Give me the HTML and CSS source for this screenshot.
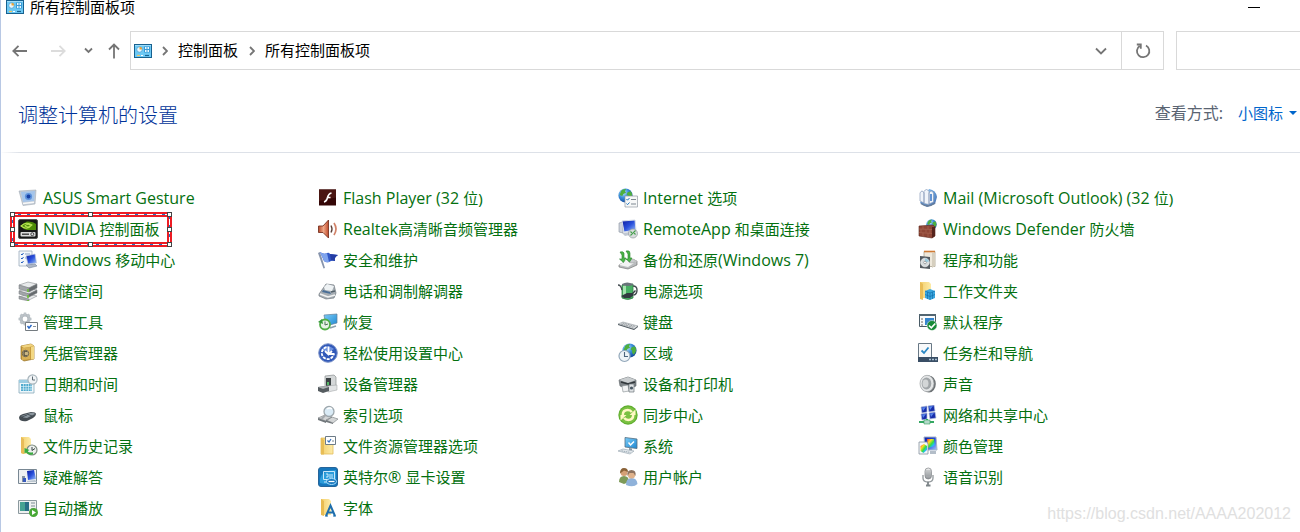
FILE: index.html
```html
<!DOCTYPE html>
<html lang="zh-CN">
<head>
<meta charset="utf-8">
<title>所有控制面板项</title>
<link rel="stylesheet" href="styles.css">
</head>
<body>
<svg class="defs" aria-hidden="true">
  <defs>
    <linearGradient id="gBlue" x1="0" y1="0" x2="1" y2="1"><stop offset="0" stop-color="#0a1a9c"/><stop offset=".5" stop-color="#2a50dc"/><stop offset="1" stop-color="#a4c8fa"/></linearGradient>
    <linearGradient id="gSky" x1="0" y1="0" x2="1" y2="1"><stop offset="0" stop-color="#7ccdf8"/><stop offset="1" stop-color="#1d86d0"/></linearGradient>
    <linearGradient id="gGrey" x1="0" y1="0" x2="0" y2="1"><stop offset="0" stop-color="#f4f4f4"/><stop offset="1" stop-color="#8e9296"/></linearGradient>
    <linearGradient id="gFolder" x1="0" y1="0" x2="1" y2="0"><stop offset="0" stop-color="#f3cf6b"/><stop offset="1" stop-color="#fdeba8"/></linearGradient>
    <linearGradient id="gHorn" x1="0" y1="0" x2="1" y2="0"><stop offset="0" stop-color="#b5482a"/><stop offset=".5" stop-color="#f0a888"/><stop offset="1" stop-color="#c04c2c"/></linearGradient>
    <radialGradient id="gGlobe" cx=".35" cy=".3" r=".8"><stop offset="0" stop-color="#bfe6ff"/><stop offset=".45" stop-color="#3b8edb"/><stop offset="1" stop-color="#0b3b8f"/></radialGradient>
    <linearGradient id="gRainbow" x1="0" y1="0" x2="1" y2="1"><stop offset="0" stop-color="#f33"/><stop offset=".3" stop-color="#fd2"/><stop offset=".55" stop-color="#3d4"/><stop offset=".75" stop-color="#2bf"/><stop offset="1" stop-color="#c3e"/></linearGradient>
    <symbol id="panel" viewBox="0 0 18 14">
      <rect x=".5" y=".5" width="17" height="13" fill="#6cc8f4" stroke="#17618f"/>
      <path d="M1 1h16v1H1z" fill="#9fdcf9"/>
      <circle cx="5.500" cy="5.500" r="2.700" fill="#eaf8ff" stroke="#3a8fc4" stroke-width=".6"/><path d="M5.500 5.500V2.800a2.700 2.700 0 0 1 2.700 2.700z" fill="#e9a33a"/>
      <path d="M10 2.500h6v6h-6z" fill="#3a9ad4"/>
      <path d="M11 3h1.500v2H11zM13.500 3H15v2h-1.500zM11 6h1.500v2H11zM13.500 6H15v2h-1.500z" fill="#e9f8ff"/>
      <path d="M3 11.500h3" stroke="#f3c55c" stroke-width="1.200"/><path d="M7 11.500h2" stroke="#fff" stroke-width="1.200"/><path d="M11 11.500h4" stroke="#17618f" stroke-width="1.200"/>
    </symbol>
    <symbol id="globe" viewBox="0 0 14 14">
      <circle cx="7" cy="7" r="6.600" fill="url(#gGlobe)"/>
      <path d="M3 2.500q2-2 4.500-1.500l-1 2 1 1.500-2.500 1L4 7.500 1.500 6.500zM9 4l3-1q1.500 2 1 5l-2 3-1.500-2V7L8 6z" fill="#4eaf3e"/>
    </symbol>
  </defs>
</svg>

<header class="titlebar">
  <svg class="panel-icon" aria-hidden="true"><use href="#panel"/></svg>
  <span class="window-title">所有控制面板项</span>
  <button class="minimize" type="button" aria-label="最小化"></button>
</header>

<nav class="toolbar" aria-label="导航">
  <button class="tool back" type="button" aria-label="后退"><svg width="16" height="14" viewBox="0 0 16 14"><path d="M15 7H1.500M6.500 1.800L1.300 7l5.200 5.200"/></svg></button>
  <button class="tool forward" type="button" aria-label="前进" disabled><svg width="16" height="14" viewBox="0 0 16 14"><path d="M1 7h13.500M9.500 1.800L14.700 7l-5.200 5.200"/></svg></button>
  <button class="tool recent" type="button" aria-label="最近浏览的位置"><svg width="9" height="7" viewBox="0 0 9 7"><path d="M1 1.500l3.500 3.500L8 1.500"/></svg></button>
  <button class="tool up" type="button" aria-label="向上"><svg width="12" height="16" viewBox="0 0 12 16"><path d="M6 15.500V1.500M1 6.500l5-5 5 5"/></svg></button>
  <div class="address">
    <svg class="panel-icon" aria-hidden="true"><use href="#panel"/></svg>
    <svg class="crumb-arrow" width="6" height="10" viewBox="0 0 6 10" aria-hidden="true"><path d="M1 1l4 4-4 4"/></svg>
    <a class="crumb" href="#">控制面板</a>
    <svg class="crumb-arrow" width="6" height="10" viewBox="0 0 6 10" aria-hidden="true"><path d="M1 1l4 4-4 4"/></svg>
    <a class="crumb" href="#">所有控制面板项</a>
    <button class="tool history" type="button" aria-label="以前的位置"><svg width="12" height="8" viewBox="0 0 12 8"><path d="M1 1.500l5 5 5-5"/></svg></button>
    <button class="tool refresh" type="button" aria-label="刷新"><svg width="16" height="16" viewBox="0 0 16 16"><path d="M11 2.500a6.200 6.200 0 1 1-6.400.4M1.800 1.500h4v4.300"/></svg></button>
  </div>
  <input class="search" type="search" aria-label="搜索控制面板">
</nav>

<section class="heading">
  <h1>调整计算机的设置</h1>
  <label class="view-label" for="view">查看方式:</label>
  <span class="view">
    <select id="view"><option>类别</option><option>大图标</option><option selected>小图标</option></select>
    <svg width="8" height="4" viewBox="0 0 8 4" aria-hidden="true"><path d="M0 0h8L4 4z"/></svg>
  </span>
</section>

<main>
<ul class="items">
  <li><a href="#"><svg viewBox="0 0 20 20"><path d="M1 3l17-1-1 14-12 1.500z" fill="#c3ccd6" stroke="#a2abb6" stroke-width=".6"/><path d="M3 4l14-1-1 10-11 1z" fill="#a4c4ea"/><circle cx="10.500" cy="8.500" r="3.600" fill="#5d92dc"/><circle cx="10.500" cy="8.500" r="1.900" fill="#173fa4"/><path d="M5 15.500l11-1.300" stroke="#f8f8f8" stroke-width="1.500"/></svg><span class="name"><span class="latin">ASUS Smart Gesture</span></span></a></li>
  <li><a href="#"><svg viewBox="0 0 20 20"><path d="M1 1.500h17v16H1z" fill="#340606"/><path d="M1 1.500h17v8L1 13z" fill="#4a1612"/><path d="M6 14q2.200-.5 3.300-3.800Q10.500 5.500 13.500 5M9 9.500h3.500" fill="none" stroke="#fff" stroke-width="1.700"/></svg><span class="name"><span class="latin">Flash Player (32 </span>位)</span></a></li>
  <li><a href="#"><svg viewBox="0 0 20 20"><use href="#globe" width="15" height="15"/><path d="M7 8h12.500v11H7z" fill="#f7f8f8" stroke="#909aa2" stroke-width=".7"/><path d="M8.500 11l1 1.200 2-2.200M8.500 15.500l1 1.200 2-2.200" fill="none" stroke="#2277bf"/><path d="M13 11.500h5M13 16h5" stroke="#7d8790"/></svg><span class="name"><span class="latin">Internet </span>选项</span></a></li>
  <li><a href="#"><svg viewBox="0 0 20 20"><path d="M11 1q7 1 8 8l-2 7-8 3-7-4z" fill="url(#gGlobe)" opacity=".75"/><path d="M2 5q2-4 4 0v10l-4-2zM6 3.500q2.500-4 5 0v13l-5-1zM11 5q2-4 4.500 0v9L11 16z" fill="#f0f4fa" stroke="#8799b8" stroke-width=".7"/><path d="M3 15.500q7 5 14-.5" stroke="#677d99" fill="none" stroke-width="1.500"/><path d="M13 6v7" stroke="#3374c7" stroke-width="1.500"/></svg><span class="name"><span class="latin">Mail (Microsoft Outlook) (32 </span>位)</span></a></li>

  <li class="marked"><a href="#"><svg viewBox="0 0 20 20"><rect x=".5" y=".5" width="19" height="19" rx="1.500" fill="#171817" stroke="#555"/><path d="M9 2.500q6-.5 9 2.500v6H9q-4-1-6-4 2.500-3.500 6-4.500z" fill="#4d8b08"/><path d="M3 7q5-5 11-1-5 6-11 1zm4-.2q3.500-3 5.500 0-2.500 2.500-5.500 0z" fill="none" stroke="#b9e455" stroke-width="1.100"/><rect x="2.500" y="13" width="15" height="4.500" rx="1" fill="#ddd"/><path d="M4 15.200h7" stroke="#333" stroke-width="1.300"/><circle cx="14.300" cy="15.200" r="1.500" fill="none" stroke="#444"/></svg><span class="name"><span class="latin">NVIDIA </span>控制面板</span></a>
    <svg class="marquee" aria-hidden="true">
      <rect class="marquee-band"/><rect class="marquee-base"/><rect class="marquee-dash"/>
      <g class="handles"><rect class="l t"/><rect class="c t"/><rect class="r t"/><rect class="l m"/><rect class="r m"/><rect class="l b"/><rect class="c b"/><rect class="r b"/></g>
    </svg>
  </li>
  <li><a href="#"><svg viewBox="0 0 20 20"><path d="M.5 7h4.500L10.500 1v18L5 13.500H.5z" fill="url(#gHorn)" stroke="#783322" stroke-width=".9"/><path d="M13 6.500q2 3.500 0 7" fill="none" stroke="#5d4038" stroke-width="1.400"/><path d="M16 4q4 6 0 12" fill="none" stroke="#d18268" stroke-width="1.700"/></svg><span class="name"><span class="latin">Realtek</span>高清晰音频管理器</span></a></li>
  <li><a href="#"><svg viewBox="0 0 20 20"><path d="M1 4l4-1v11l-4-1z" fill="#cdd2dc" stroke="#88909e" stroke-width=".6"/><path d="M4 2l13-1 1 10-12 2z" fill="url(#gBlue)" stroke="#d7dde8"/><path d="M4 14l8-1 4 2-9 2z" fill="#c0c8d2"/><circle cx="15" cy="14.500" r="4.500" fill="#d8dcdd" stroke="#949b9f" stroke-width=".7"/><path d="M12.500 12.500l2 2-2 2M17.500 11.500l-2 2 2 2" fill="none" stroke="#46a04d" stroke-width="1.100"/></svg><span class="name"><span class="latin">RemoteApp </span>和桌面连接</span></a></li>
  <li><a href="#"><svg viewBox="0 0 20 20"><use href="#globe" x="8" width="11" height="11"/><path d="M1 7l14-1 2 2v9l-3 2-13-2z" fill="#8e4636" stroke="#5d261d" stroke-width=".6"/><path d="M14 8l3 0v9l-3 2z" fill="#55231c"/><path d="M1 10l13 .5M1 13.500l13 1M5 7v3m5-3v3M3 10v3m5-2.500v3m4-3v3.500M5 14v3.500m5-3v4" stroke="#b0705f" stroke-width=".5"/></svg><span class="name"><span class="latin">Windows Defender </span>防火墙</span></a></li>

  <li><a href="#"><svg viewBox="0 0 20 20"><path d="M1 1h13v15H1z" fill="#f4f7fa" stroke="#9dacbc" stroke-width=".8"/><path d="M3 4l1 1 1.500-2M3 8l1 1 1.500-2M3 12l1 1 1.500-2" stroke="#235fbd" fill="none"/><path d="M7 4h5M7 8h4" stroke="#879ec5"/><path d="M8 6l9-2 1.500 9L10 14z" fill="url(#gBlue)" stroke="#b9c5da" stroke-width=".7"/><path d="M8 15l9-1 2 2-8 2z" fill="#aeb8c6" stroke="#75859c" stroke-width=".6"/></svg><span class="name"><span class="latin">Windows </span>移动中心</span></a></li>
  <li><a href="#"><svg viewBox="0 0 20 20"><path d="M0 3l2-1 5 16-1.500.5z" fill="#8794ac"/><path d="M2 2q4 3 7 1 2-1 3 1l8 1q-4 2-3 6-3-1-6 1-3 1-5-1z" fill="#3157c5"/><path d="M2 2q4 3 7 1l2 9q-3 1-5-1z" fill="#7ea3ed"/><path d="M12 4l8 1q-4 2-3 6l-4-1z" fill="#243da4"/></svg><span class="name">安全和维护</span></a></li>
  <li><a href="#"><svg viewBox="0 0 20 20"><path d="M1 15l10-6 8 2v4l-9 4-9-2z" fill="#b9bcbe" stroke="#777" stroke-width=".7"/><path d="M1 15l10-7 8 3-9 6z" fill="#f2f3f3"/><ellipse cx="14" cy="11" rx="3.500" ry="2" fill="#c8ccce" stroke="#999" stroke-width=".5"/><path d="M2 2q3-1 4 1v5h2l-2.500 4.500L1.500 9H4V5zM8 1q4-1 4 2v5h2l-2.500 4L8 9h2V4z" fill="#4bb448" stroke="#258328" stroke-width=".6"/></svg><span class="name">备份和还原<span class="latin">(Windows 7)</span></span></a></li>
  <li><a href="#"><svg viewBox="0 0 20 20"><path d="M6 1.500h11v15H6z" fill="#eee8db" stroke="#aaa391" stroke-width=".8"/><path d="M14 3h3v13l-3 2z" fill="#d6cfbf"/><path d="M6 1.500h11" stroke="#cf7a34" stroke-width="1.600"/><path d="M2 6l10 1v12l-10-1z" fill="#535a60"/><circle cx="7" cy="12.500" r="4.300" fill="#d8dddf" stroke="#f2f2f2" stroke-width=".7"/><path d="M7 8.500q3 0 4 3L7 12.500z" fill="#9acbdf"/><circle cx="7" cy="12.500" r="1.300" fill="#fff" stroke="#777" stroke-width=".6"/></svg><span class="name">程序和功能</span></a></li>

  <li><a href="#"><svg viewBox="0 0 20 20"><g stroke="#777b7e" stroke-width=".5"><path d="M1 4l9-3 9 2-8 4zM1 10l9-3 9 2-8 4zM1 16l9-3 9 2-8 4z" fill="#e8eaeb"/><path d="M1 4l10 3v4L1 8zM1 10l10 3v3L1 13zM1 15l10 3v2L1 18z" fill="#a2a6a9"/><path d="M11 7l8-4v4l-8 4zM11 13l8-4v3l-8 4z" fill="#666b6e"/></g><path d="M10 8v3m0 3v3m0 2v1" stroke="#6bbf37" stroke-width="1.600"/></svg><span class="name">存储空间</span></a></li>
  <li><a href="#"><svg viewBox="0 0 20 20"><path d="M1 13l5-7 2-3 8 1 2 8-2 5-8 1-7-3z" fill="#a6adb3" stroke="#70797f" stroke-width=".7"/><path d="M6 6l3-3 7 2-2 5-7-1z" fill="#eef2f4"/><path d="M5 9l7 2 1 2-9-2z" fill="#496e97"/><path d="M2 13l8 3 7-2" fill="none" stroke="#f2f3f3" stroke-width="1.500"/><path d="M13 11l4-1" stroke="#53616b" stroke-width="1.500"/></svg><span class="name">电话和调制解调器</span></a></li>
  <li><a href="#"><svg viewBox="0 0 20 20"><path d="M4 4l11-1v14q-5 3-11 0z" fill="#48b064" stroke="#358047" stroke-width=".8"/><path d="M5 5l3-1v13l-3-1z" fill="#a4e3ae"/><path d="M4 3q5-3 11 0v1q-5 2-11 0z" fill="#69737a"/><path d="M15 5q4 0 4 4t-3 5M0 4q3 0 4 5" fill="none" stroke="#444c51" stroke-width="1.400"/><path d="M3 15l6-3 5 0 3-3 1 1-3 3 1 1-4 3-6 0z" fill="#323a40"/></svg><span class="name">电源选项</span></a></li>
  <li><a href="#"><svg viewBox="0 0 20 20"><path d="M2 1h9l2 2v14H2z" fill="url(#gFolder)"/><path d="M2 1l3 2v16l-3-1z" fill="#e9bd57"/><path d="M7 10l5-2 5 2v7l-5 2-5-2z" fill="#3ba7df"/><path d="M7 10l5 2 5-2M12 12v7M9.500 11v7M14.500 11v7M7 13.500l5 2 5-2" stroke="#1271ae" stroke-width=".7" fill="none"/></svg><span class="name">工作文件夹</span></a></li>

  <li><a href="#"><svg viewBox="0 0 20 20"><circle cx="7" cy="7" r="4" fill="none" stroke="#b4bbc0" stroke-width="3.200"/><path d="M7 .5v3m0 7v3M.5 7h3m7 0h3M2.500 2.500l2 2m5 0l2-2M2.500 11.500l2-2" stroke="#bcc3c8" stroke-width="2.500"/><path d="M7.500 10.500h12v8h-12z" fill="#fff" stroke="#747b80"/><path d="M9.500 14l1.500 2 2.500-3" fill="none" stroke="#2364c4" stroke-width="1.400"/><path d="M15 14.500h3" stroke="#8b9399"/></svg><span class="name">管理工具</span></a></li>
  <li><a href="#"><svg viewBox="0 0 20 20"><path d="M6 3l13-1v9l-11 3z" fill="url(#gSky)" stroke="#62809a" stroke-width=".7"/><path d="M12 16l6-2" stroke="#8ca0ac" stroke-width="1.500"/><circle cx="7" cy="12.500" r="5" fill="#e8f2e5" stroke="#52ae45" stroke-width="1.800"/><path d="M0 10l4-3 1 5z" fill="#37983b"/><path d="M7 9.500v3.500l3-1" stroke="#507158" fill="none"/></svg><span class="name">恢复</span></a></li>
  <li><a href="#"><svg viewBox="0 0 20 20"><path d="M0 12l5-2 15 4-4 3z" fill="#dfe2e4" stroke="#92989d" stroke-width=".6"/><path d="M0 12l16 5v1L0 13zM16 17l4-3v1l-4 3z" fill="#505960"/><path d="M4.500 11l13 3.500M3 12l13 3.500" stroke="#767d82" stroke-width=".7" stroke-dasharray="2 .7"/></svg><span class="name">键盘</span></a></li>
  <li><a href="#"><svg viewBox="0 0 20 20"><path d="M1.500 2.500h16v12h-16z" fill="#f8fafb" stroke="#495b66"/><path d="M1 2h17v2H1z" fill="#526571"/><path d="M3 7h2m-2 3h2m-2 3h2" stroke="#666" stroke-width="1.200"/><path d="M7 6h9v7H7z" fill="#3485cd"/><circle cx="14" cy="13.500" r="5" fill="#168a36" stroke="#fff" stroke-width=".5"/><path d="M11 13.500l2.300 2.300 4-4.300" stroke="#fff" stroke-width="1.600" fill="none"/></svg><span class="name">默认程序</span></a></li>

  <li><a href="#"><svg viewBox="0 0 20 20"><path d="M3 3l10-2 3 2v13l-10 2-3-2z" fill="#c79b3c" stroke="#997427" stroke-width=".7"/><path d="M3 3l10-2 3 2-10 2z" fill="#f1d480"/><path d="M13 4l3-1v13l-3 .5z" fill="#f3d884"/><path d="M4 5l8-1v12l-8 1z" fill="#d8b156"/><circle cx="7.500" cy="10.500" r="3.200" fill="#c9b582" stroke="#6f6650"/><path d="M9 8.500q-3-1-3 2t3 2" stroke="#555140" stroke-width="1.200" fill="none"/></svg><span class="name">凭据管理器</span></a></li>
  <li><a href="#"><svg viewBox="0 0 20 20"><circle cx="10" cy="10" r="9.300" fill="#3159b9" stroke="#8096c9"/><path d="M3 7q6-7 13-1l-5 3z" fill="#6e92df"/><path d="M8.500 4.200a6 6 0 1 0 7.200 7" fill="none" stroke="#fff" stroke-width="1.800" stroke-dasharray="3 1"/><path d="M10.500 3.500v7.500h6M7 8l3.500 3.500L14 8" stroke="#fff" fill="none" stroke-width="1.800"/></svg><span class="name">轻松使用设置中心</span></a></li>
  <li><a href="#"><svg viewBox="0 0 20 20"><use href="#globe" x="4" width="15" height="15"/><circle cx="6.500" cy="13" r="5.500" fill="#edf3f7" stroke="#93a8ba" stroke-width="1.200"/><path d="M6.500 9v4.500h3.500" fill="none" stroke="#4c657d" stroke-width="1.100"/></svg><span class="name">区域</span></a></li>
  <li><a href="#"><svg viewBox="0 0 20 20"><path d="M.5.5h13v15H.5z" fill="#f8f9fa" stroke="#687885"/><path d="M3.500 7.500l2.500 2.500 4.500-5.500" stroke="#2a88c5" fill="none" stroke-width="1.800"/><path d="M0 14h20v5H0z" fill="#394e65"/><path d="M11 16.500h2m1 0h2m1 0h2" stroke="#a9bfd2" stroke-width="1.400"/></svg><span class="name">任务栏和导航</span></a></li>

  <li><a href="#"><svg viewBox="0 0 20 20"><path d="M1 6h15v13H1z" fill="#eff7fb" stroke="#89a9ba" stroke-width=".8"/><path d="M1 6h15v3H1z" fill="#9ccde2"/><path d="M3 10h11v7H3z" fill="#51aacd"/><path d="M3 12.500h11M3 15h11M5.500 10v8M8 10v8M10.500 10v8M13 10v8" stroke="#e4f5fb" stroke-width=".6"/><circle cx="14.500" cy="5.500" r="4.600" fill="#f1f4f6" stroke="#a6b3ba" stroke-width="1.200"/><path d="M14.500 2.500v3.500h2.500" stroke="#5b6972" fill="none"/></svg><span class="name">日期和时间</span></a></li>
  <li><a href="#"><svg viewBox="0 0 20 20"><path d="M7 2l9-1 2 2v10H7z" fill="#d4d7d8" stroke="#8b8f91" stroke-width=".7"/><path d="M8 4h5v8H8z" fill="#3b4143"/><path d="M9 8h2v3H9z" fill="#54b666"/><path d="M8 12l11-1v5l-9 2z" fill="#e1e3e4" stroke="#989c9f" stroke-width=".5"/><path d="M0 13l8-1 3 1v4l-6 2-5-2z" fill="#555c60"/><path d="M0 13l8-1 3 1-6 2z" fill="#aeb2b4"/></svg><span class="name">设备管理器</span></a></li>
  <li><a href="#"><svg viewBox="0 0 20 20"><path d="M1 6l9-3 8 3v6l-8 3-8-3z" fill="#7c8286" stroke="#5d6367" stroke-width=".6"/><path d="M1 6l9-3 8 3-8 3z" fill="#c9cdcf"/><path d="M3 8l7 2 7-2" stroke="#30363a" stroke-width="1.500" fill="none"/><path d="M4 12l6-1 1 6-6 1z" fill="#f1f2f3" stroke="#838b8f" stroke-width=".6"/><path d="M11 10l5 0v8l-5 0z" fill="#dfe2e4" stroke="#6f777b" stroke-width=".7"/><circle cx="13.500" cy="14" r="1.600" fill="#475561"/></svg><span class="name">设备和打印机</span></a></li>
  <li><a href="#"><svg viewBox="0 0 20 20"><ellipse cx="11" cy="10" rx="6.800" ry="8.600" fill="#6d7275"/><ellipse cx="9" cy="9.500" rx="7" ry="8.200" fill="#e4e6e7" stroke="#9a9ea1" stroke-width=".7"/><ellipse cx="8.500" cy="9.500" rx="4.800" ry="6" fill="#a0a5a8"/><ellipse cx="7.500" cy="9.500" rx="3" ry="4" fill="#d3d6d7"/></svg><span class="name">声音</span></a></li>

  <li><a href="#"><svg viewBox="0 0 20 20"><path d="M1 13q0-3 4-4l8-2q5 0 5 2t-3 4l-6 3q-7 1-8-3z" fill="#454d53"/><path d="M3 11l9-3q4-1 5 1l-8 4q-4 0-6-2z" fill="#8b969e"/><path d="M9 9l5 2M4 12l5-2" stroke="#354047" stroke-width=".8"/></svg><span class="name">鼠标</span></a></li>
  <li><a href="#"><svg viewBox="0 0 20 20"><path d="M0 13l7-3 7 2-6 4zM8 15l6-3 6 2-5 4z" fill="#d3d5d6" stroke="#777c7f" stroke-width=".6"/><path d="M0 13l8 3v2l-8-3zM8 15l7 3v1l-7-2z" fill="#71777b"/><circle cx="11" cy="6.500" r="5" fill="#d6e9f5" fill-opacity=".9" stroke="#9da7ad" stroke-width="1.300"/><path d="M7.500 10l-4 4" stroke="#a5a9ad" stroke-width="2"/><path d="M9 4q3-2 5 0" stroke="#fff" fill="none" stroke-width="1.300"/></svg><span class="name">索引选项</span></a></li>
  <li><a href="#"><svg viewBox="0 0 20 20"><circle cx="10" cy="10" r="9.700" fill="#5fae2e"/><circle cx="10" cy="10" r="8.600" fill="#7ac142"/><path d="M4.800 10q0-4.800 5-4.900 2.700 0 4 2M15.200 10q0 4.800-5 4.900-2.700 0-4-2" fill="none" stroke="#fff8c4" stroke-width="2.500"/><path d="M17.500 4.500V10h-6zM2.500 15.500V10h6z" fill="#fff8c4"/></svg><span class="name">同步中心</span></a></li>
  <li><a href="#"><svg viewBox="0 0 20 20"><g fill="#172daa" stroke="#b1bfdd" stroke-width=".7"><path d="M3 2l6-1v6L4 8zM10 1l6-1 1 6-6 1zM3 9l6-1v6l-5 1zM11 8l6-1 1 6-6 1z"/></g><path d="M4 2.500l4-.5-3 4zM11 1.500l4-.5-3 4zM4 9.500l4-.5-3 4zM12 8.500l4-.5-3 4z" fill="#5685eb"/><path d="M1 17h15m-7 0v-3" stroke="#35a863" stroke-width="2"/><path d="M6 15h6v4H6z" fill="#b4d9ca" stroke="#329d5b" stroke-width=".6"/></svg><span class="name">网络和共享中心</span></a></li>

  <li><a href="#"><svg viewBox="0 0 20 20"><path d="M3 1l8 0 2 2v14l-8 1-2-1z" fill="url(#gFolder)"/><path d="M3 1l3 2v15l-3-1z" fill="#e8bc58"/><circle cx="14" cy="14" r="5" fill="#ecefed" stroke="#7d8b80" stroke-width="1.200"/><path d="M14 11v3.500l3-2" stroke="#3b4548" fill="none"/><path d="M15 18.500q-5 1-7-2l-1.500 1V12l5 2-2 1.200q2 2 5.500 1z" fill="#3bab42"/></svg><span class="name">文件历史记录</span></a></li>
  <li><a href="#"><svg viewBox="0 0 20 20"><path d="M3 2h9l3 2v14H3z" fill="url(#gFolder)" stroke="#e2bd5a" stroke-width=".8"/><path d="M3 2l3 2v14.500H3z" fill="#e8bd55"/><path d="M7.500.5h10v8h-10z" fill="#fff" stroke="#6c7b87"/><path d="M9.500 4.500l1.500 1.500 2-3" fill="none" stroke="#326fbc" stroke-width="1.200"/><path d="M14 5h2" stroke="#788690"/></svg><span class="name">文件资源管理器选项</span></a></li>
  <li><a href="#"><svg viewBox="0 0 20 20"><path d="M7 1.500l12 1.500v9.500L7 11z" fill="url(#gSky)" stroke="#536d80" stroke-width=".8"/><path d="M10.500 6.500l2 2.500 3.500-3.500" fill="none" stroke="#fff" stroke-width="1.500"/><path d="M11 12l3 .500v2h-3z" fill="#8796a0"/><path d="M0 15l5-2 11 2-4 3z" fill="#e4e9ed" stroke="#9eabb5" stroke-width=".7"/><path d="M3.500 14.800l9 1.700" stroke="#9cacb7" stroke-dasharray="1.500 .7"/></svg><span class="name">系统</span></a></li>
  <li><a href="#"><svg viewBox="0 0 20 20"><path d="M6 1h12l1 13H7z" fill="url(#gBlue)" stroke="#a6b3c7"/><path d="M9 3l7 0 1 7-7 2z" fill="url(#gRainbow)"/><path d="M1 6h8l1 2v10H1z" fill="#f6f7f9" stroke="#8792a0" stroke-width=".8"/><path d="M2.500 10l3.500-2 3 2v4l-3.500 3-3-2z" fill="url(#gRainbow)"/><path d="M12 15h6v3h-6z" fill="#b3bdc8"/></svg><span class="name">颜色管理</span></a></li>

  <li><a href="#"><svg viewBox="0 0 20 20"><path d="M.5 2.500h18v14H.5z" fill="#eef0f2" stroke="#788793"/><path d="M9 4l7-1 2 9-8 1z" fill="url(#gBlue)"/><path d="M4 9h3v6H4z" fill="#8592a0"/><path d="M9 14l8-1 2 2H9z" fill="#bac5ce"/><path d="M5 11h3v4H5z" fill="#3759ba"/></svg><span class="name">疑难解答</span></a></li>
  <li><a href="#"><svg viewBox="0 0 20 20"><rect x=".5" y=".5" width="19" height="19" rx="2.500" fill="#1677bc" stroke="#26659a"/><path d="M2 12q2-9 16-9v10q-6 6-16 3z" fill="#2c9cda"/><path d="M5.500 4.500h11v8h-11zM8 7h2v3H8m4-3v4m2-4v4m-8 4h6m-3-3v3" fill="none" stroke="#ddf2ff" stroke-width=".9"/><ellipse cx="13.500" cy="14.500" rx="5" ry="3" fill="#1778be" stroke="#a8ddfc"/><path d="M10.500 14.500h6" stroke="#fff" stroke-width="1.300"/></svg><span class="name">英特尔<span class="latin">® </span>显卡设置</span></a></li>
  <li><a href="#"><svg viewBox="0 0 20 20"><path d="M1 15q0-6 5-6t5 6l-5 2z" fill="#7d9a58"/><circle cx="6" cy="5.500" r="3.500" fill="#d5a075"/><path d="M2 6.500Q2 1 6 1t4 4L6 3.500z" fill="#8a6238"/><path d="M8 18q0-7 5.500-7t6 6q-4 4-11.500 1z" fill="#8fb2da"/><circle cx="13.500" cy="8" r="3.600" fill="#e0b28b"/><path d="M9.500 9q-1-6 4-6t4 6l-2-3h-4z" fill="#8e735f"/></svg><span class="name">用户帐户</span></a></li>
  <li><a href="#"><svg viewBox="0 0 20 20"><rect x="7" y="1" width="6.500" height="11" rx="3.200" fill="url(#gGrey)" stroke="#7e8386" stroke-width=".7"/><path d="M8 4h5M8 6h5M8 8h5" stroke="#8e9498" stroke-width=".6"/><path d="M5 8v3q0 4 5 4t5-4V8" fill="none" stroke="#92989c" stroke-width="1.300"/><path d="M10 15v3M8 18.500h4.500" stroke="#7d8488" stroke-width="1.800"/></svg><span class="name">语音识别</span></a></li>

  <li><a href="#"><svg viewBox="0 0 20 20"><path d="M.5 2.500h18v13H.5z" fill="#eef0f0" stroke="#8b999e"/><path d="M2 4h9v9H2z" fill="#286f86"/><path d="M2 4h5v9H2z" fill="#46a392"/><path d="M13 5h4m-4 3h4m-4 3h4" stroke="#a3afb3" stroke-width="1.400"/><circle cx="15.500" cy="14.500" r="4.500" fill="#48a836"/><path d="M14 12l4 2.500-4 2.500z" fill="#fff"/></svg><span class="name">自动播放</span></a></li>
  <li><a href="#"><svg viewBox="0 0 20 20"><path d="M3 1h8l2 2v14H3z" fill="url(#gFolder)"/><path d="M3 1l3 2v15l-3-1z" fill="#e8bb50"/><path d="M8 18L12.500 7.500 17 18M9.500 14.500h6" fill="none" stroke="#1f6eac" stroke-width="2"/><path d="M7 18h3m5 0h3" stroke="#1f6eac"/></svg><span class="name">字体</span></a></li>
</ul>
</main>
<div class="watermark">https://blog.csdn.net/AAAA202012</div>
</body>
</html>
```
FILE: styles.css
```css
* { box-sizing: border-box; }

body {
  position: relative;
  min-height: 100vh;
  margin: 0;
  border-left: 1px solid #b8c8e4;
  background: #fff;
  color: #000;
  font: 15px/20px "Noto Sans", "Noto Sans CJK SC", sans-serif;
  overflow-x: hidden;
}

.defs { position: absolute; width: 0; height: 0; }
a { color: inherit; text-decoration: none; }
button, select, input { font: inherit; color: inherit; border: 0; margin: 0; padding: 0; background: none; }

.panel-icon { flex: none; width: 18px; height: 14px; }

.titlebar {
  display: flex;
  align-items: center;
  gap: 6px;
  height: 14px;
  padding: 0 40px 0 5px;
}
.window-title { line-height: 14px; }
.minimize { width: 12px; height: 14px; margin-left: auto; display: flex; align-items: center; }
.minimize::before { content: ""; width: 12px; height: 1px; background: #000; }

.toolbar { display: flex; align-items: stretch; height: 39px; margin-top: 17px; padding-left: 10px; }
.tool { display: flex; align-items: center; justify-content: center; }
.tool svg, .crumb-arrow { fill: none; stroke: #757575; stroke-width: 1.8; }
.back { width: 18px; }
.forward { width: 18px; margin-left: 20px; }
.forward svg { stroke: #dcdcdc; }
.recent { width: 12px; margin-left: 15px; }
.up { width: 14px; margin-left: 13px; }

.address {
  display: flex;
  flex: 1;
  align-items: center;
  margin-left: 9px;
  padding-left: 3px;
  border: 1px solid #d9d9d9;
}
.crumb { padding-bottom: 2px; }
.crumb-arrow { margin: 0 10px; }
.crumb-arrow + .crumb { margin-right: 1px; }
.history { align-self: stretch; width: 40px; margin-left: auto; }
.refresh { align-self: stretch; width: 42px; border-left: 1px solid #d9d9d9; }
.search { width: 125px; margin: 0 -1px 0 12px; border: 1px solid #d9d9d9; }

.heading {
  display: flex;
  align-items: center;
  height: 83px;
  padding: 7px 3px 0 17px;
  border-bottom: 1px solid;
  border-image: linear-gradient(to right, #fff, #dde1e8 20px) 1;
}
h1 { margin: 2px 0 0; color: #003399; font-size: 20px; line-height: 28px; font-weight: 300; }
.view-label { margin: 0 0 4px auto; color: #5a6472; font-size: 16px; }
.view { display: flex; align-items: center; gap: 5px; margin: 0 0 4px 15px; color: #0066cc; }
.view select { appearance: none; }
.view svg { fill: #0066cc; }

.items {
  display: grid;
  grid-template-columns: repeat(auto-fill, 300px);
  grid-auto-rows: 31px;
  margin: 0;
  padding: 29px 0 0 17px;
  list-style: none;
  color: #04700f;
}
.items li { position: relative; display: flex; align-items: center; }
.items a { display: flex; align-items: center; gap: 5px; white-space: nowrap; }
.items a svg { flex: none; width: 20px; height: 20px; }
.name { white-space: pre; }
.latin { font: 16px/20px "Open Sans", "Noto Sans", sans-serif; }

.marked { justify-self: start; }
.marquee { position: absolute; left: -8px; top: -1px; width: calc(100% + 20px); height: 34px; overflow: visible; shape-rendering: crispEdges; }
.marquee rect { fill: none; }
.marquee-band, .marquee-base, .marquee-dash { x: 2px; y: 2px; width: calc(100% - 4px); height: calc(100% - 4px); }
.marquee-band { stroke: #ed1c24; stroke-width: 5px; }
.marquee-base { stroke: #1a78c8; stroke-width: 1px; }
.marquee-dash { stroke: #fff; stroke-width: 1px; stroke-dasharray: 6px 3px; }
.marquee .handles rect { width: 4px; height: 4px; fill: #fff; stroke: #444; stroke-width: 1px; }
.marquee .l { x: 0; }
.marquee .c { x: calc(50% - 2px); }
.marquee .r { x: calc(100% - 4px); }
.marquee .t { y: 0; }
.marquee .m { y: calc(50% - 2px); }
.marquee .b { y: calc(100% - 4px); }

.watermark {
  position: absolute;
  right: 9px;
  bottom: 8px;
  color: #e0e0e0;
  font: 16px/20px "Liberation Sans", sans-serif;
}
```
